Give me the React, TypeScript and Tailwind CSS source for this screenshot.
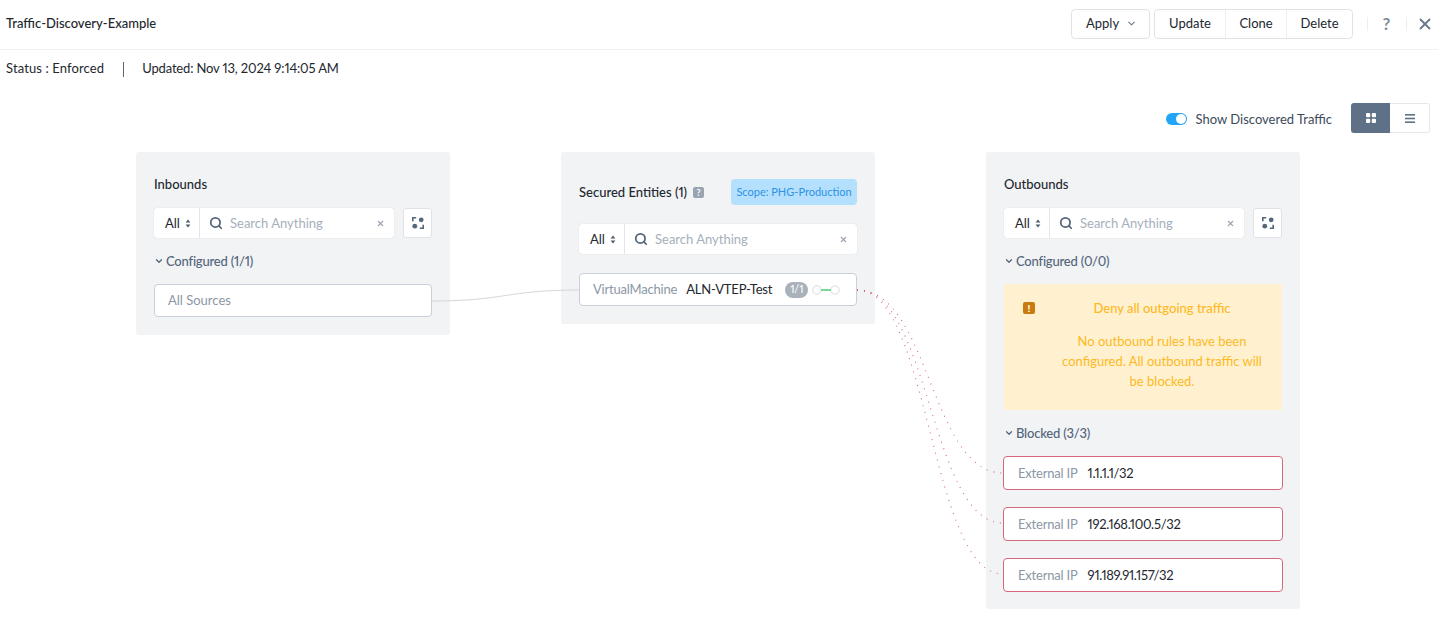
import { ChevronDown, Search, X } from 'lucide-react';

type BlockedIp = { ip: string };

const blocked: BlockedIp[] = [{ ip: '1.1.1.1/32' }, { ip: '192.168.100.5/32' }, { ip: '91.189.91.157/32' }];

function UpDown() {
  return (
    <svg width="6" height="9" viewBox="0 0 6 9" className="text-[#4b5a6c]" fill="currentColor">
      <path d="M3 0.5 5.4 3.4H0.6Z" />
      <path d="M3 8.5 0.6 5.6H5.4Z" />
    </svg>
  );
}

function FocusIcon() {
  return (
    <svg width="12" height="12" viewBox="0 0 12 12" fill="none" className="text-[#54667b]">
      <path d="M0.8 4.2V0.8H4.2" stroke="currentColor" strokeWidth="1.6" />
      <path d="M11.2 7.8V11.2H7.8" stroke="currentColor" strokeWidth="1.6" />
      <circle cx="9.2" cy="2.8" r="2.4" fill="currentColor" />
      <circle cx="2.8" cy="9.2" r="2.4" fill="currentColor" />
    </svg>
  );
}

function SearchBar({ wide }: { wide?: boolean }) {
  return (
    <div className={`flex h-[30px] items-center rounded-[3px] bg-white shadow-[0_0_1px_#b8c0ca] ${wide ? 'w-[278px]' : 'w-[240px]'}`}>
      <div className="flex h-full w-[46px] shrink-0 items-center gap-[5px] border-r border-[#e1e5ea] pl-[11px] pt-[1px] text-[13px] text-[#22272e]">
        All <UpDown />
      </div>
      <Search size={14} strokeWidth={3} className="ml-[9px] shrink-0 text-[#54667b]" />
      <span className="ml-[7px] flex-1 pt-[1px] text-[13px] text-[#a6b0bc]">Search Anything</span>
      <X size={9} strokeWidth={3} className="mr-[9px] text-[#9aa5b2]" />
    </div>
  );
}

function SectionLabel({ children }: { children: string }) {
  return (
    <div className="flex items-center gap-[2px] text-[13px] font-medium leading-[16px] tracking-[-0.2px] text-[#54667b]">
      <ChevronDown size={10} strokeWidth={3} />
      {children}
    </div>
  );
}

function FilterRow() {
  return (
    <div className="mt-[16px] flex items-center justify-between">
      <SearchBar />
      <button className="flex h-[30px] w-[29px] items-center justify-center rounded-[3px] border border-[#dfe3e8] bg-white">
        <FocusIcon />
      </button>
    </div>
  );
}

export default function App() {
  return (
    <div className="relative h-[624px] w-[1438px] overflow-hidden bg-white font-['Lato','Open_Sans',sans-serif] text-[#22272e] proportional-nums">
      <header className="flex h-[50px] items-center justify-between border-b border-[#f1f2f4] pb-[2px] pl-[6px]">
        <h1 className="text-[13px] font-medium">Traffic-Discovery-Example</h1>
        <div className="flex items-center">
          <button className="flex h-[30px] w-[79px] items-center gap-[7px] rounded-[4px] border border-[#dfe3e8] pl-[14px] text-[13px]">
            Apply <ChevronDown size={11} strokeWidth={2.5} className="text-[#6b7b8e]" />
          </button>
          <div className="ml-[4px] flex h-[30px] w-[199px] rounded-[4px] border border-[#dfe3e8] text-[13px]">
            <button className="w-[71px] border-r border-[#eceef1]">Update</button>
            <button className="w-[61px] border-r border-[#eceef1]">Clone</button>
            <button className="flex-1">Delete</button>
          </div>
          <div className="ml-[14px] h-[14px] w-px bg-[#eceef1]" />
          <span className="w-[38px] pr-[1px] text-center text-[17px] font-bold text-[#7d8c9d]">?</span>
          <div className="h-[14px] w-px bg-[#eceef1]" />
          <div className="flex w-[31px] justify-end pr-[4px]">
            <X size={18} strokeWidth={2.5} className="text-[#6b7b8e]" />
          </div>
        </div>
      </header>

      <div className="flex h-[36px] items-center pl-[6px] pt-[2px] text-[13px]">
        <span className="tracking-[0.12px]">Status : Enforced</span>
        <div className="ml-[19px] h-[15px] w-px bg-[#5a6472]" />
        <span className="ml-[18px] tracking-[-0.15px]">Updated: Nov 13, 2024 9:14:05 AM</span>
      </div>

      <div className="mt-[17px] flex h-[30px] items-center justify-end pr-[8px]">
        <div className="mt-[2px] flex h-[12px] w-[21px] items-center justify-end rounded-full bg-[#22a5f7] pr-[1px]">
          <div className="h-[10px] w-[10px] rounded-full bg-white" />
        </div>
        <span className="ml-[9px] mt-[3px] text-[13px] text-[#3d4a5a]">Show Discovered Traffic</span>
        <div className="ml-[19px] flex h-[30px] w-[39px] items-center justify-center rounded-l-[3px] bg-[#5f7186]">
          <svg width="10" height="10" viewBox="0 0 10 10" fill="white">
            <rect x="0" y="0" width="4.2" height="4.2" rx="1" />
            <rect x="5.8" y="0" width="4.2" height="4.2" rx="1" />
            <rect x="0" y="5.8" width="4.2" height="4.2" rx="1" />
            <rect x="5.8" y="5.8" width="4.2" height="4.2" rx="1" />
          </svg>
        </div>
        <div className="flex h-[30px] w-[40px] items-center justify-center rounded-r-[3px] border border-l-0 border-[#e4e7eb]">
          <svg width="10" height="9" viewBox="0 0 10 9" fill="#5f7186">
            <rect y="0" width="10" height="1.6" />
            <rect y="3.7" width="10" height="1.6" />
            <rect y="7.4" width="10" height="1.6" />
          </svg>
        </div>
      </div>

      <main className="mt-[19px] flex items-start gap-[111px] pl-[136px]">
        {/* inbounds */}
        <section className="h-[183px] w-[314px] rounded-[3px] bg-[#f2f3f5] px-[18px] pt-[24px]">
          <h2 className="text-[13px] font-medium leading-[16px]">Inbounds</h2>
          <FilterRow />
          <div className="mt-[15px]">
            <SectionLabel>Configured (1/1)</SectionLabel>
          </div>
          <div className="mt-[15px] flex h-[33px] items-center rounded-[4px] border border-[#c9d0d9] bg-white pl-[13px] pt-[1px] text-[13px] text-[#8b97a5]">
            All Sources
          </div>
        </section>

        {/* secured entities */}
        <section className="h-[172px] w-[314px] rounded-[3px] bg-[#f2f3f5] px-[18px] pt-[27px]">
          <div className="flex h-[26px] items-center justify-between">
            <div className="flex items-center gap-[6px] pt-[1px] text-[13px] font-medium">
              Secured Entities (1)
              <span className="flex h-[11px] w-[11px] items-center justify-center rounded-[2px] bg-[#98a4b1] text-[9px] font-bold text-white">?</span>
            </div>
            <span className="flex h-[26px] w-[126px] items-center justify-center rounded-[4px] bg-[#b5e0fd] text-[11px] text-[#2a92e6]">
              Scope: PHG-Production
            </span>
          </div>
          <div className="mt-[19px]">
            <SearchBar wide />
          </div>
          <div className="mt-[19px] flex h-[33px] items-center rounded-[4px] border border-[#c9d0d9] bg-white pl-[13px] text-[13px] tracking-[-0.2px]">
            <span className="pt-[1px] text-[#8b97a5]">VirtualMachine</span>
            <span className="ml-[9px] pt-[1px]">ALN-VTEP-Test</span>
            <span className="ml-[13px] flex h-[16px] w-[23px] items-center justify-center rounded-full bg-[#a9b1bb] text-[11px] text-white">1/1</span>
            <svg width="30" height="12" viewBox="0 0 30 12" fill="none" className="ml-[3px]">
              <circle cx="6" cy="6" r="4.2" stroke="#d5dae0" />
              <circle cx="24" cy="6" r="4.2" stroke="#d5dae0" />
              <path d="M10 6H20" stroke="#5ad07a" strokeWidth="1.6" />
            </svg>
          </div>
        </section>

        {/* outbounds */}
        <section className="h-[457px] w-[314px] rounded-[3px] bg-[#f2f3f5] px-[18px] pt-[24px]">
          <h2 className="text-[13px] font-medium leading-[16px]">Outbounds</h2>
          <FilterRow />
          <div className="mt-[15px]">
            <SectionLabel>Configured (0/0)</SectionLabel>
          </div>
          <div className="mt-[15px] flex h-[126px] bg-[#fff1d0] pl-[19px] pt-[14px] text-[13px] leading-[20px] text-[#fdb91f]">
            <span className="mt-[4px] flex h-[12px] w-[12px] shrink-0 items-center justify-center rounded-[2px] bg-[#c97a0d] text-[10px] font-black text-white">!</span>
            <div className="ml-[17px] w-[220px] text-center">
              <p className="font-medium">Deny all outgoing traffic</p>
              <p className="mt-[13px]">
                No outbound rules have been
                <br />
                configured. All outbound traffic will
                <br />
                be blocked.
              </p>
            </div>
          </div>
          <div className="mt-[15px]">
            <SectionLabel>Blocked (3/3)</SectionLabel>
          </div>
          <div className="-mx-[1px] mt-[15px] flex flex-col gap-[17px]">
            {blocked.map((row) => (
              <div key={row.ip} className="flex h-[34px] items-center rounded-[4px] border border-[#d4697e] bg-white pl-[14px] pt-[1px] text-[13px]">
                <span className="tracking-[-0.2px] text-[#8b97a5]">External IP</span>
                <span className="ml-[10px] tracking-[-0.3px]">{row.ip}</span>
              </div>
            ))}
          </div>
        </section>
      </main>

      {/* connector lines lie over the panels */}
      <svg width="1438" height="624" className="pointer-events-none absolute left-0 top-0" fill="none">
        <path d="M432 301C505 301 506 290 579 290" stroke="#d3d7dc" />
        <g stroke="#cc3a55" strokeOpacity="0.75" strokeWidth="1.1" strokeDasharray="1 6">
          <path d="M857 290C930 290 930 473 1003 473" />
          <path d="M857 290C930 290 930 523 1003 523" />
          <path d="M857 290C930 290 930 574 1003 574" />
        </g>
      </svg>
    </div>
  );
}
